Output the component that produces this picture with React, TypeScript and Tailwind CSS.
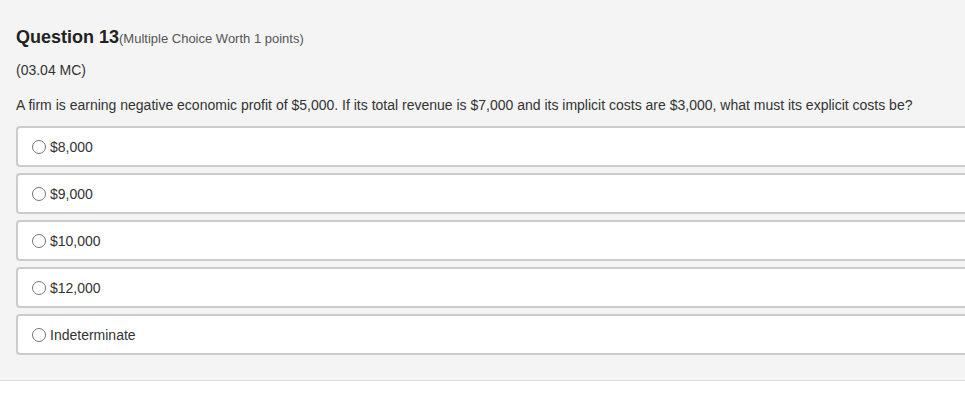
import React from 'react';

const choices = ['$8,000', '$9,000', '$10,000', '$12,000', 'Indeterminate'];

const Choice = ({ label }: { label: string }) => (
    <label className="flex items-center h-[41px] rounded-[4px] border-2 border-r-0 border-[#cccccc] bg-white pl-[14px] mr-[-10px]">
        <span className="w-[14px] h-[14px] rounded-full border border-[#767676] bg-white shrink-0 mt-[1px]" />
        <span className="ml-[4px] mt-[2px] text-[14px] text-[#333333]">{label}</span>
    </label>
);

export default function App() {
    return (
        <div className="w-[965px] h-[397px] overflow-hidden bg-white font-['Liberation_Sans',Arial,sans-serif]">
            <div className="bg-[#f4f4f4] h-[381px] border-b border-[#dedede] pl-[16px] pt-[27px]">
                <div className="flex items-end text-[#222222]">
                    <span className="text-[18px] font-bold leading-[20px]">Question 13</span>
                    <span className="text-[13px] text-[#555555] leading-[16px]">(Multiple Choice Worth 1 points)</span>
                </div>
                <div className="mt-[15px] text-[14px] text-[#333333] leading-[16px]">(03.04 MC)</div>
                <p className="mt-[19px] text-[14px] text-[#333333] leading-[16px]">
                    A firm is earning negative economic profit of $5,000. If its total revenue is $7,000 and its implicit costs are $3,000, what must its explicit costs be?
                </p>
                <div className="mt-[13px] flex flex-col gap-[6px]">
                    {choices.map((c) => (
                        <Choice key={c} label={c} />
                    ))}
                </div>
            </div>
        </div>
    );
}
